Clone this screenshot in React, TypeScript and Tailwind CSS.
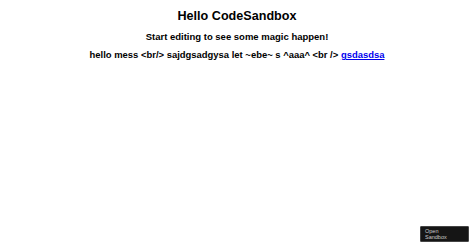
import React from 'react';

export default function App() {
  return (
    <div className="relative min-h-[248px] w-full bg-white text-black font-['Liberation_Sans',Arial,sans-serif]">
      {/* Sandbox content */}
      <div className="pt-[9px] text-center">
        <h1 className="text-[12.6px] leading-[14px] font-bold">Hello CodeSandbox</h1>
        <h2 className="mt-[8px] text-[9.5px] leading-[11px] font-bold">Start editing to see some magic happen!</h2>
        <h2 className="mt-[7px] text-[9.45px] leading-[11px] font-bold">
          hello mess &lt;br/&gt; sajdgsadgysa let ~ebe~ s ^aaa^ &lt;br /&gt;{' '}
          <a href="#" className="text-[#0000ee] underline">gsdasdsa</a>
        </h2>
      </div>

      {/* Open Sandbox floating button */}
      <a
        href="#"
        className="absolute right-[5px] bottom-[6px] flex w-[49px] h-[16px] flex-col justify-center bg-[#151515] border border-[#444] rounded-[1px] pl-[4px] text-[5.5px] leading-[6px] text-[#ccc]"
      >
        <span>Open</span>
        <span>Sandbox</span>
      </a>
    </div>
  );
}
